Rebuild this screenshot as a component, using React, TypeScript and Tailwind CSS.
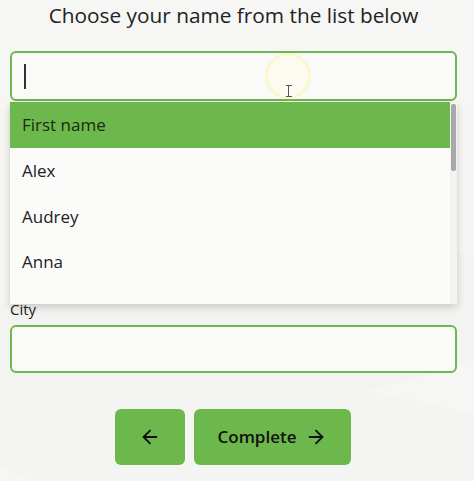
import { ArrowLeft, ArrowRight } from "lucide-react";

const NAMES = ["Alex", "Audrey", "Anna"];

export default function App() {
  return (
    <div
      className="relative h-[481px] w-full overflow-hidden bg-[#f6f6f5] text-[#222]"
      style={{ fontFamily: '"Open Sans", "Liberation Sans", sans-serif' }}
    >
      {/* soft background waves */}
      <div className="pointer-events-none absolute left-[-60px] top-[250px] h-[160px] w-[600px] rotate-[-6deg] rounded-[50%] bg-[#f1f1f0] opacity-60" />
      <div className="pointer-events-none absolute left-[-40px] top-[380px] h-[140px] w-[600px] rotate-[4deg] rounded-[50%] bg-[#f3f3f2] opacity-70" />

      <div className="relative ml-[10px] w-[447px]">
        <h1 className="pt-[1px] text-center text-[20.8px] leading-[28px] text-[#222]">
          Choose your name from the list below
        </h1>

        {/* name field with open dropdown */}
        <div className="relative mt-[22px]">
          <div className="flex h-[50px] items-center rounded-[6px] border-2 border-[#6fb64f] bg-[#fafaf9] px-[12px]">
            <span className="h-[25px] w-[1.5px] bg-[#333]" />
          </div>

          <div className="absolute left-0 right-0 top-[51px] z-10 h-[202px] overflow-hidden bg-[#fbfbfa] shadow-[0_3px_8px_rgba(0,0,0,0.18)]">
            <div className="mr-[7px]">
              <div className="flex h-[46px] items-center bg-[#6db84c] px-[12px] text-[17px] text-[#1c2a12]">
                First name
              </div>
              {NAMES.map((n) => (
                <div key={n} className="flex h-[45.5px] items-center px-[12px] text-[17px] text-[#222]">
                  {n}
                </div>
              ))}
            </div>
            <div className="absolute bottom-0 right-0 top-0 w-[7px] bg-[#f3f3f2]">
              <div className="ml-[1px] mt-[2px] h-[67px] w-[5px] rounded-[2px] bg-[#a8a8a8]" />
            </div>
          </div>
        </div>

        {/* field under the dropdown */}
        <div className="mt-[198px]">
          <label className="block text-[15px] leading-[20px] text-[#222]">City</label>
          <div className="mt-[6px] h-[48px] rounded-[6px] border-2 border-[#6fb64f] bg-[#fafaf9]" />
        </div>

        <div className="mt-[36px] flex justify-center gap-[9px] pr-[2px]">
          <button className="flex h-[56px] w-[70px] items-center justify-center rounded-[6px] bg-[#6db84c] text-[#111]">
            <ArrowLeft size={22} strokeWidth={2} />
          </button>
          <button className="flex h-[56px] w-[157px] items-center justify-center gap-[8px] rounded-[6px] bg-[#6db84c] text-[17px] font-semibold text-[#111]">
            Complete
            <ArrowRight size={22} strokeWidth={2} />
          </button>
        </div>
      </div>

      {/* mouse cursor highlight */}
      <div className="pointer-events-none absolute left-[265px] top-[53px] h-[46px] w-[46px] rounded-full border-[3px] border-[#fbf8d0] bg-[#fdfcec]/60" />
      <div className="pointer-events-none absolute left-[285px] top-[85px] flex h-[12px] w-[7px] flex-col items-center justify-between">
        <span className="h-[1px] w-[6px] bg-[#555]" />
        <span className="h-full w-[1px] bg-[#555]" />
        <span className="h-[1px] w-[6px] bg-[#555]" />
      </div>
    </div>
  );
}
